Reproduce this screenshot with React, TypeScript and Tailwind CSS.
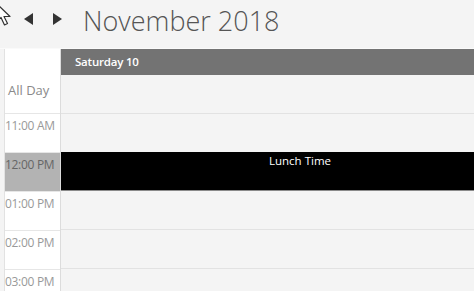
import React from 'react';

const times = ['11:00 AM', '12:00 PM', '01:00 PM', '02:00 PM', '03:00 PM'];

function Cursor() {
  return (
    <svg width="18" height="26" viewBox="0 0 18 26" className="absolute left-[-5px] top-[2px]">
      <path d="M1.5 1.5 L1.5 20 L6 15.5 L9.5 23 L12.5 21.5 L9 14.5 L15 14.5 Z" fill="#fff" stroke="#333" strokeWidth="1.2" strokeLinejoin="round" />
    </svg>
  );
}

export default function App() {
  return (
    <div className="w-[474px] h-[291px] overflow-hidden bg-[#f4f4f4] font-['Open_Sans','Noto_Sans',sans-serif] relative">
      <Cursor />
      <div className="h-[48px] flex items-center pl-[24px]">
        <svg width="9" height="12" viewBox="0 0 9 12" className="mt-[-10px]">
          <path d="M9 0 L0 6 L9 12 Z" fill="#333" />
        </svg>
        <svg width="9" height="12" viewBox="0 0 9 12" className="ml-[20px] mt-[-10px]">
          <path d="M0 0 L9 6 L0 12 Z" fill="#333" />
        </svg>
        <span className="ml-[21px] mt-[-8px] text-[27px] font-light text-[#555] leading-none">
          November 2018
        </span>
      </div>
      <div className="flex border-t border-[#fafafa]">
        <div className="ml-[4px] w-[57px] shrink-0 bg-white border-l border-[#e2e2e2] border-r border-r-[#dcdcdc]">
          <div className="h-[64px] pt-[35px] text-[13px] text-[#8a8a8a] leading-none pl-[3px]">All Day</div>
          {times.map((t) => (
            <div
              key={t}
              className={
                'h-[39px] border-t border-[#e6e6e6] pt-[4px] text-[12px] leading-[16px] tracking-[-0.3px] ' +
                (t === '12:00 PM' ? 'bg-[#b3b3b3] text-[#666]' : 'text-[#999]')
              }
            >
              {t}
            </div>
          ))}
        </div>
        <div className="w-[478px] shrink-0">
          <div className="h-[26px] bg-[#737373] text-white text-[11.5px] font-semibold flex items-center pl-[14px] tracking-[-0.2px]">
            Saturday 10
          </div>
          <div className="h-[38px]" />
          <div className="h-[39px] border-t border-[#e2e2e2]" />
          <div className="h-[39px] bg-black border-b border-[#8a8a8a] flex justify-center pt-[1px]">
            <span className="text-white text-[11.5px] leading-[16px]">Lunch Time</span>
          </div>
          <div className="h-[38px]" />
          <div className="h-[39px] border-t border-[#e2e2e2]" />
          <div className="h-[39px] border-t border-[#e2e2e2]" />
        </div>
      </div>
    </div>
  );
}
